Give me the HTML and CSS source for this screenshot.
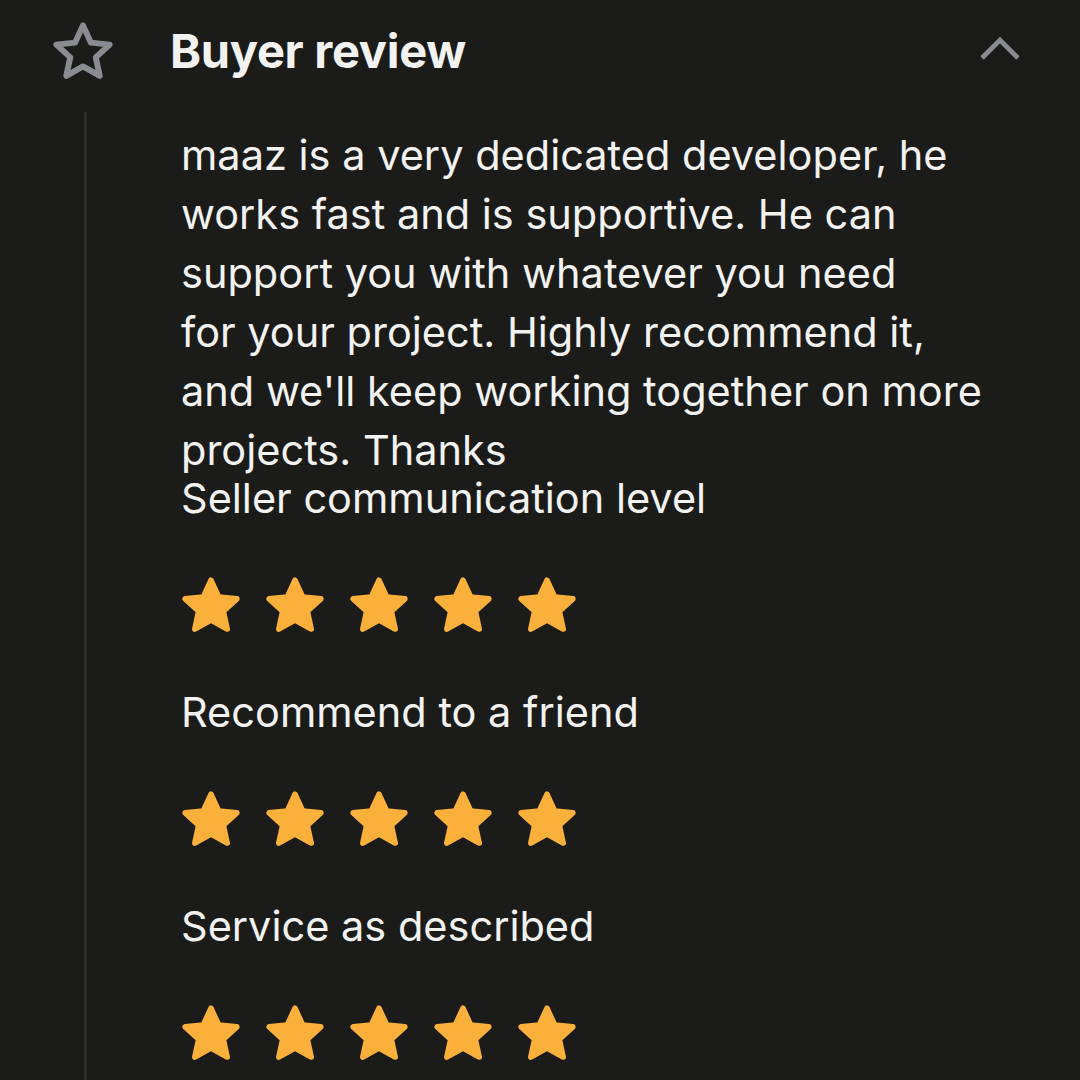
FILE: index.html
```html
<!DOCTYPE html>
<html lang="en">
<head>
<meta charset="UTF-8" />
<meta name="viewport" content="width=device-width, initial-scale=1.0" />
<title>Buyer review</title>
<link rel="stylesheet" href="styles.css">
</head>
<body>
<!-- star symbol reused by every rating row -->
<svg width="0" height="0" class="defs">
  <defs>
    <path id="star" d="M12 2.6l2.8 6.1 6.6.7-4.9 4.5 1.4 6.5L12 17.1l-5.9 3.3 1.4-6.5L2.6 9.4l6.6-.7z" />
  </defs>
</svg>

<section class="review">
  <!-- header -->
  <div class="review-head">
    <svg class="head-star" viewBox="0 0 24 24">
      <use href="#star" />
    </svg>
    <h2>Buyer review</h2>
    <svg class="chevron" viewBox="0 0 24 24">
      <path d="M3 16l9-9 9 9" />
    </svg>
  </div>

  <!-- body -->
  <div class="review-body">
    <p class="comment">maaz is a very dedicated developer, he<br>
      works fast and is supportive. He can<br>
      support you with whatever you need<br>
      for your project. Highly recommend it,<br>
      and we'll keep working together on more<br>
      projects. Thanks</p>

    <div class="rating">
      <div class="rating-label">Seller communication level</div>
      <div class="stars">
        <svg viewBox="0 0 24 24"><use href="#star" /></svg>
        <svg viewBox="0 0 24 24"><use href="#star" /></svg>
        <svg viewBox="0 0 24 24"><use href="#star" /></svg>
        <svg viewBox="0 0 24 24"><use href="#star" /></svg>
        <svg viewBox="0 0 24 24"><use href="#star" /></svg>
      </div>
    </div>

    <div class="rating">
      <div class="rating-label">Recommend to a friend</div>
      <div class="stars">
        <svg viewBox="0 0 24 24"><use href="#star" /></svg>
        <svg viewBox="0 0 24 24"><use href="#star" /></svg>
        <svg viewBox="0 0 24 24"><use href="#star" /></svg>
        <svg viewBox="0 0 24 24"><use href="#star" /></svg>
        <svg viewBox="0 0 24 24"><use href="#star" /></svg>
      </div>
    </div>

    <div class="rating">
      <div class="rating-label">Service as described</div>
      <div class="stars">
        <svg viewBox="0 0 24 24"><use href="#star" /></svg>
        <svg viewBox="0 0 24 24"><use href="#star" /></svg>
        <svg viewBox="0 0 24 24"><use href="#star" /></svg>
        <svg viewBox="0 0 24 24"><use href="#star" /></svg>
        <svg viewBox="0 0 24 24"><use href="#star" /></svg>
      </div>
    </div>
  </div>
</section>
</body>
</html>
```

FILE: styles.css
```css
/* === base === */
body {
  margin: 0;
  padding: 0;
  background-color: #1b1c1a;
  color: #f2f2f0;
  font-family: "Inter", "Noto Sans", sans-serif;
  height: 1080px;
  overflow: hidden;
}
.defs {
  position: absolute;
}

/* === header row === */
.review-head {
  display: flex;
  align-items: center;
  height: 112px;
  padding: 0 56px 0 49px;
}
.head-star {
  width: 68px;
  height: 68px;
  margin-top: -8px;
  fill: none;
  stroke: #8a8c92;
  stroke-width: 2.1;
  stroke-linejoin: round;
}
.review-head h2 {
  flex: 1;
  margin: -12px 0 0 53px;
  font-size: 47px;
  font-weight: 700;
  letter-spacing: -0.3px;
}
.chevron {
  width: 48px;
  height: 48px;
  margin-top: -12px;
  fill: none;
  stroke: #8a8c92;
  stroke-width: 2.3;
}

/* === review body with the thread line === */
.review-body {
  margin-left: 84px;
  padding: 14px 0 0 94px;
  border-left: 3px solid #2b2c2a;
  min-height: 1000px;
}
.comment {
  margin: 0;
  font-size: 41.5px;
  line-height: 59px;
  white-space: nowrap;
}
.rating-label {
  font-size: 41.5px;
  line-height: 48px;
}
.rating:first-of-type .rating-label {
  margin-top: -6px;
}
.stars {
  display: flex;
  gap: 18px;
  margin-left: -3px;
  padding: 51px 0 49px;
}
.stars svg {
  width: 66px;
  height: 66px;
  fill: #fbb03b;
  stroke: #fbb03b;
  stroke-width: 2;
  stroke-linejoin: round;
}
```
